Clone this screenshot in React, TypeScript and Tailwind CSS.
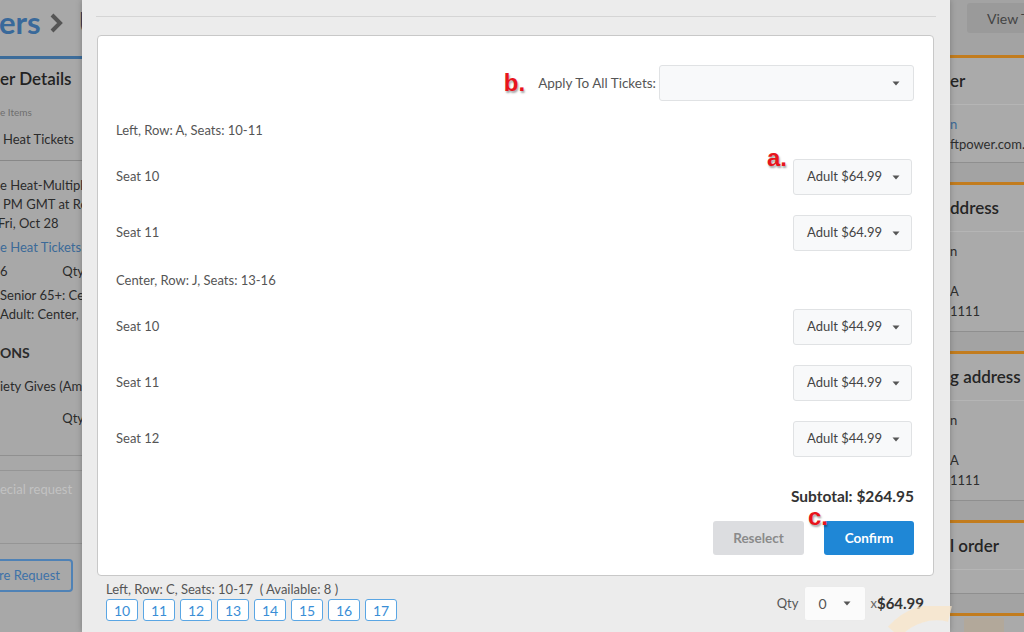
import React from "react";

type Seat = { label: string; price: string };

const groups: { title: string; seats: Seat[] }[] = [
  {
    title: "Left, Row: A, Seats: 10-11",
    seats: [
      { label: "Seat 10", price: "Adult $64.99" },
      { label: "Seat 11", price: "Adult $64.99" },
    ],
  },
  {
    title: "Center, Row: J, Seats: 13-16",
    seats: [
      { label: "Seat 10", price: "Adult $44.99" },
      { label: "Seat 11", price: "Adult $44.99" },
      { label: "Seat 12", price: "Adult $44.99" },
    ],
  },
];

const seatNumbers = ["10", "11", "12", "13", "14", "15", "16", "17"];

function Caret() {
  return (
    <svg width="8" height="5" viewBox="0 0 8 5" className="shrink-0">
      <polygon points="0.5,0.5 7.5,0.5 4,4.5" fill="#555" />
    </svg>
  );
}

function Mark({ children, className }: { children: React.ReactNode; className?: string }) {
  return (
    <span
      className={`font-['Liberation_Sans',Arial,sans-serif] text-[24px] font-bold leading-none text-[#e8141c] [text-shadow:1px_2px_2px_rgba(0,0,0,0.35)] ${className ?? ""}`}
    >
      {children}
    </span>
  );
}

function LeftStrip() {
  return (
    <div className="w-[82px] shrink-0 overflow-hidden bg-[#a8a8a8] text-[#2b2b2b] whitespace-nowrap">
      <div className="flex h-[44px] items-center text-[31px] font-bold">
        <span className="ml-[-1px] shrink-0 text-[#39699a]">ers</span>
        <svg width="14" height="20" viewBox="0 0 14 20" className="ml-[8px] mt-[2px] shrink-0">
          <path d="M3 2 L11 10 L3 18" stroke="#555" strokeWidth="4" fill="none" />
        </svg>
        <span className="ml-[16px] shrink-0 text-[#2b3b50]">Update</span>
      </div>
      <div className="mt-[12px] h-[3px] bg-[#3c6c9a]" />
      <div className="flex h-[40px] items-center text-[17px] font-semibold text-[#222]">er Details</div>
      <div className="flex h-[26px] items-center text-[10px] text-[#6e6e6e]">e Items</div>
      <div className="flex h-[30px] items-center pl-[3px] text-[13px]">Heat Tickets</div>
      <div className="mt-[5px] border-t border-[#888]" />
      <div className="pt-[15px] text-[13px] leading-[19px]">
        <div>e Heat-Multiplier</div>
        <div className="pl-[3px]">PM GMT at Rogers</div>
        <div className="ml-[-2px]">Fri, Oct 28</div>
      </div>
      <div className="mt-[4px] text-[13px] leading-[20px] text-[#3b6a98]">e Heat Tickets</div>
      <div className="mt-[4px] flex justify-between text-[13px] leading-[20px]">
        <span>6</span>
        <span className="mr-[-2px]">Qty</span>
      </div>
      <div className="mt-[5px] text-[13px] leading-[19px]">
        <div>Senior 65+: Center</div>
        <div>Adult: Center, Row</div>
      </div>
      <div className="mt-[19px] text-[14px] font-bold leading-[20px]">ONS</div>
      <div className="mt-[13px] text-[13px] leading-[20px]">iety Gives (Amount)</div>
      <div className="mt-[12px] flex justify-end text-[13px] leading-[20px]">
        <span className="mr-[-2px]">Qty</span>
      </div>
      <div className="mt-[27px] border-t border-[#909090]" />
      <div className="mt-[14px] border-t border-[#959595]" />
      <div className="mt-[8px] text-[13px] leading-[20px] text-[#c2c2c2]">ecial request</div>
      <div className="mt-[44px] border-t border-[#959595]" />
      <div className="mt-[15px] ml-[-12px] flex h-[33px] w-[85px] items-center justify-end rounded-[4px] border-2 border-[#4f82b6] pr-[11px] text-[13px] text-[#3e72a8]">
        re Request
      </div>
    </div>
  );
}

function InfoCard({ title, lines, bodyH }: { title: string; lines: { t: string; blue?: boolean }[]; bodyH: string }) {
  return (
    <div className="border-t-[3px] border-[#c27c1e] bg-[#aaaaaa]">
      <div className="flex h-[47px] items-center border-b border-[#b5b5b5] text-[17px] font-semibold text-[#252525]">
        {title}
      </div>
      <div className={`${bodyH} pt-[9px] text-[13px] leading-[20px] text-[#2e2e2e]`}>
        {lines.map((l, i) => (
          <div key={i} className={l.blue ? "text-[#3b6a98]" : ""}>
            {l.t || "\u00a0"}
          </div>
        ))}
      </div>
      <div className="border-b border-[#8f8f8f]" />
    </div>
  );
}

function RightStrip() {
  return (
    <div className="w-[74px] shrink-0 overflow-hidden bg-[#a3a3a3] whitespace-nowrap">
      <div className="ml-[17px] mt-[3px] flex h-[30px] w-[90px] items-center rounded-[3px] bg-[#9a9a9a] pl-[20px] text-[14px] text-[#444]">
        View Tickets
      </div>
      <div className="mt-[22px] flex flex-col gap-[19px]">
        <InfoCard
          title="er"
          bodyH="h-[57px]"
          lines={[{ t: "n", blue: true }, { t: "ftpower.com.au" }]}
        />
        <InfoCard
          title="ddress"
          bodyH="h-[99px]"
          lines={[{ t: "n" }, { t: "" }, { t: "A" }, { t: "1111" }]}
        />
        <InfoCard
          title="g address"
          bodyH="h-[99px]"
          lines={[{ t: "n" }, { t: "" }, { t: "A" }, { t: "1111" }]}
        />
        <InfoCard title="l order" bodyH="h-[23px]" lines={[]} />
        <div className="h-[20px] border-t-[3px] border-[#c27c1e] bg-[#aaaaaa]" />
      </div>
    </div>
  );
}

function SeatSelect({ value }: { value: string }) {
  return (
    <div className="flex h-[36px] w-[119px] items-center justify-between rounded-[3px] border border-[#e0e2e4] bg-[#f8f9fa] pl-[13px] pr-[11px] text-[13px] text-[#444]">
      <span>{value}</span>
      <Caret />
    </div>
  );
}

function Modal() {
  return (
    <div className="relative flex w-[868px] shrink-0 flex-col bg-[#ececec] shadow-[0_0_6px_rgba(0,0,0,0.25)]">
      <div className="mx-[14px] h-[17px] border-b border-[#d5d5d5]" />
      <div className="ml-[15px] mr-[16px] mt-[18px] h-[541px] rounded-[4px] border border-[#c8c8c8] bg-white pl-[18px] pr-[19px] pt-[29px] text-[13px] text-[#555]">
        <div className="mb-[10px] flex h-[36px] items-center justify-end">
          <Mark className="mr-[13px]">b.</Mark>
          <span className="text-[13.5px]">Apply To All Tickets:</span>
          <div className="ml-[3px] flex h-[36px] w-[255px] items-center justify-end rounded-[3px] border border-[#e0e2e4] bg-[#f8f9fa] pr-[13px]">
            <Caret />
          </div>
        </div>

        {groups.map((g, gi) => (
          <div key={gi}>
            <div className="py-[9px] leading-[20px]">{g.title}</div>
            {g.seats.map((s, si) => (
              <div key={si} className="flex h-[56px] items-center justify-between">
                <span>{s.label}</span>
                <div className="relative mr-[2px]">
                  {gi === 0 && si === 0 && (
                    <Mark className="absolute right-[calc(100%+6px)] top-[-13px]">a.</Mark>
                  )}
                  <SeatSelect value={s.price} />
                </div>
              </div>
            ))}
          </div>
        ))}

        <div className="mt-[19px] text-right text-[15.5px] font-bold leading-[20px] text-[#333]">
          Subtotal: $264.95
        </div>
        <div className="mt-[15px] flex justify-end gap-[20px]">
          <button className="h-[34px] w-[91px] rounded-[3px] bg-[#dcdde0] text-[13.5px] font-bold text-[#8a8a8a]">
            Reselect
          </button>
          <div className="relative">
            <button className="h-[34px] w-[90px] rounded-[3px] bg-[#1f87d6] text-[13.5px] font-bold text-white">
              Confirm
            </button>
            <Mark className="absolute left-[-16px] top-[-16px]">c.</Mark>
          </div>
        </div>
      </div>

      <div className="mt-[6px] flex items-center justify-between pl-[24px] pr-[26px]">
        <div>
          <div className="text-[13px] leading-[14px] text-[#555]">
            Left, Row: C, Seats: 10-17 &nbsp;( Available: 8 )
          </div>
          <div className="mt-[3px] flex gap-[5px]">
            {seatNumbers.map((n) => (
              <div
                key={n}
                className="flex h-[22px] w-[32px] items-center justify-center rounded-[3px] border border-[#5aa6e4] bg-white text-[14px] text-[#3a8ed6]"
              >
                {n}
              </div>
            ))}
          </div>
        </div>
        <div className="mt-[4px] flex items-center text-[13px] text-[#555]">
          <span>Qty</span>
          <div className="ml-[6px] flex h-[35px] w-[62px] items-center justify-between rounded-[3px] border border-[#ebebeb] bg-[#fbfbfb] pl-[13px] pr-[14px] text-[14px]">
            <span>0</span>
            <Caret />
          </div>
          <span className="ml-[4px] text-[#666]">x</span>
          <span className="text-[15px] font-bold text-[#333]">$64.99</span>
        </div>
      </div>
    </div>
  );
}

export default function App() {
  return (
    <div className="relative flex h-[632px] w-[1024px] overflow-hidden font-['Lato','Open_Sans',sans-serif]">
      <LeftStrip />
      <Modal />
      <RightStrip />
      {/* faint watermark logo bleeding through at the bottom */}
      <svg
        className="pointer-events-none absolute left-[880px] top-[606px]"
        width="144"
        height="26"
        viewBox="0 0 144 26"
      >
        <path d="M14 26 A56 56 0 0 1 70 8" stroke="#fbe6c6" strokeWidth="16" fill="none" opacity="0.7" />
        <rect x="84" y="12" width="40" height="14" fill="#c4a77e" opacity="0.35" />
      </svg>
    </div>
  );
}
